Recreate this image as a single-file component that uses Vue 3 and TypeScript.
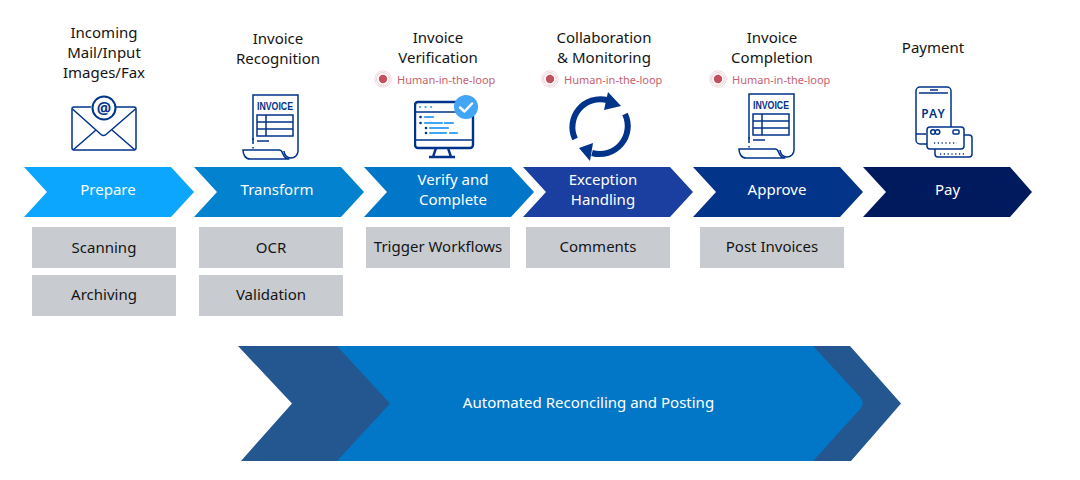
<template>
  <div class="page">
    <div class="flow">
      <div v-for="step in steps" :key="step.chevron" class="col" :style="{ width: step.colWidth + 'px' }">
        <div class="head">
          <div class="label" :style="{ width: step.labelWidth + 'px', paddingTop: step.labelTop + 'px' }">
            <div v-for="line in step.label" :key="line">{{ line }}</div>
          </div>
          <div v-if="step.hitl !== null" class="hitl" :style="{ marginLeft: step.hitl + 'px' }">
            <svg width="18" height="18" viewBox="0 0 18 18">
              <circle cx="9" cy="9" r="8.2" fill="none" stroke="#eab9c0" stroke-width="0.6" />
              <circle cx="9" cy="9" r="6.4" fill="none" stroke="#e3a3ad" stroke-width="0.6" />
              <circle cx="9" cy="9" r="4.2" fill="#c2505f" />
            </svg>
            <span>Human-in-the-loop</span>
          </div>
          <div class="icon" :style="{ marginLeft: step.iconLeft + 'px', marginBottom: step.iconBottom + 'px' }">
            <svg v-if="step.icon === 'mail'" width="66" height="58" viewBox="0 0 66 58" class="line">
              <path d="M20 12H3a2 2 0 0 0-2 2v39a2 2 0 0 0 2 2h60a2 2 0 0 0 2-2V14a2 2 0 0 0-2-2H45" />
              <path d="M1.500 14L30 39.500a4 4 0 0 0 5 0L64.500 14" />
              <path d="M2 55L25 35M64 55L41 35" />
              <circle cx="33" cy="13" r="11.500" stroke-width="2" fill="#fff" />
              <text x="33" y="18.500" class="at">@</text>
            </svg>
            <svg v-else-if="step.icon === 'invoice'" width="57" height="66" viewBox="0 0 57 66" class="line">
              <path d="M11 50V1H56V57a7 7 0 0 1-14 0" />
              <path d="M11 54.500V53M11 46V44" />
              <path d="M1 56H37c2 0 3 1 3.500 3 1 3 3 6 7 6H8C3 65 1 60 1 56Z" />
              <path d="M15 47H27" />
              <rect x="15" y="21" width="36" height="21" />
              <path d="M15 28H51M15 35H51M24 21V42" />
              <text transform="translate(33 15.500) scale(1 1.300)" class="inv">INVOICE</text>
            </svg>
            <svg v-else-if="step.icon === 'monitor'" width="66" height="65" viewBox="0 0 66 65">
              <g class="line thick">
                <path d="M45 7H4a3 3 0 0 0-3 3V50a3 3 0 0 0 3 3H56a3 3 0 0 0 3-3V21" />
                <path d="M1 17H45M1 45H59" stroke-width="1.600" />
                <path d="M22 53L19 62M34 53L37 62M15 62H41" />
              </g>
              <g class="dash">
                <path d="M6 12h.2M11.500 12h.2M17 12h.2" />
                <path d="M11 22h8M11 28h17M31 28h8M16 33h18M16 38h16M36 38h7" />
              </g>
              <circle cx="6.500" cy="22" r="1.300" fill="#00338a" />
              <circle cx="6.500" cy="28" r="1.300" fill="#00338a" />
              <circle cx="12" cy="33" r="1.300" fill="#00338a" />
              <circle cx="12" cy="38" r="1.300" fill="#00338a" />
              <circle cx="52" cy="12" r="12" fill="#42a5f5" />
              <path d="M46 12.500L50.500 16.500L58 8.500" fill="none" stroke="#fff" stroke-width="2.500" stroke-linecap="round" stroke-linejoin="round" />
            </svg>
            <svg v-else-if="step.icon === 'sync'" width="66" height="72" viewBox="0 0 66 72">
              <path d="M9 49A28 28 0 0 1 41 10M59 24A28 28 0 0 1 26 63" fill="none" stroke="#00338a" stroke-width="6" />
              <path d="M42 2L55 16L38 20ZM13 58L27 53L24 71Z" fill="#00338a" />
            </svg>
            <svg v-else width="60" height="73" viewBox="0 0 60 73" class="line">
              <path d="M13 58H6a4 4 0 0 1-4-4V5a4 4 0 0 1 4-4H33a4 4 0 0 1 4 4V41" />
              <path d="M5 7H34M16 4H24M2 48H12" />
              <text x="19.500" y="32" class="pay">PAY</text>
              <rect x="13" y="41" width="37" height="22" rx="3" />
              <path d="M50 49H55a3 3 0 0 1 3 3V68a3 3 0 0 1-3 3H24a3 3 0 0 1-3-3V63" />
              <circle cx="19" cy="46" r="2.300" />
              <circle cx="23.500" cy="46" r="2.300" />
              <rect x="39" y="44" width="6" height="4" rx="1" />
              <path d="M20 57H43M26 68H51" stroke-dasharray="1.200 2.600" />
            </svg>
          </div>
        </div>
        <div class="chevron" :style="{ background: step.color, paddingLeft: step.padLeft + 'px', paddingRight: step.padRight + 'px' }">
          <div v-for="line in step.chevronLines" :key="line">{{ line }}</div>
        </div>
        <div class="tasks" :style="{ marginLeft: step.taskLeft + 'px' }">
          <div v-for="task in step.tasks" :key="task" class="task">{{ task }}</div>
        </div>
      </div>
    </div>

    <div class="band">
      <div class="band-front">Automated Reconciling and Posting</div>
    </div>
  </div>
</template>

<script setup lang="ts">
interface Step {
  chevron: string;
  chevronLines: string[];
  color: string;
  colWidth: number;
  label: string[];
  labelWidth: number;
  labelTop: number;
  hitl: number | null;
  icon: 'mail' | 'invoice' | 'monitor' | 'sync' | 'pay';
  iconLeft: number;
  iconBottom: number;
  padLeft: number;
  padRight: number;
  taskLeft: number;
  tasks: string[];
}

const steps: Step[] = [
  {
    chevron: 'prepare', chevronLines: ['Prepare'], color: '#0ca6ff', colWidth: 170,
    label: ['Incoming', 'Mail/Input', 'Images/Fax'], labelWidth: 160, labelTop: 22, hitl: null,
    icon: 'mail', iconLeft: 47, iconBottom: 14, padLeft: 0, padRight: 2, taskLeft: 8,
    tasks: ['Scanning', 'Archiving'],
  },
  {
    chevron: 'transform', chevronLines: ['Transform'], color: '#0382cf', colWidth: 170,
    label: ['Invoice', 'Recognition'], labelWidth: 168, labelTop: 28, hitl: null,
    icon: 'invoice', iconLeft: 48, iconBottom: 7, padLeft: 0, padRight: 4, taskLeft: 5,
    tasks: ['OCR', 'Validation'],
  },
  {
    chevron: 'verify', chevronLines: ['Verify and', 'Complete'], color: '#0277ca', colWidth: 159,
    label: ['Invoice', 'Verification'], labelWidth: 148, labelTop: 27, hitl: 10,
    icon: 'monitor', iconLeft: 50, iconBottom: 7, padLeft: 8, padRight: 0, taskLeft: 2,
    tasks: ['Trigger Workflows'],
  },
  {
    chevron: 'exception', chevronLines: ['Exception', 'Handling'], color: '#1b3fa0', colWidth: 170,
    label: ['Collaboration', '& Monitoring'], labelWidth: 162, labelTop: 27, hitl: 18,
    icon: 'sync', iconLeft: 43, iconBottom: 5, padLeft: 0, padRight: 10, taskLeft: 3,
    tasks: ['Comments'],
  },
  {
    chevron: 'approve', chevronLines: ['Approve'], color: '#02358a', colWidth: 170,
    label: ['Invoice', 'Completion'], labelWidth: 158, labelTop: 27, hitl: 16,
    icon: 'invoice', iconLeft: 45, iconBottom: 8, padLeft: 0, padRight: 2, taskLeft: 7,
    tasks: ['Post Invoices'],
  },
  {
    chevron: 'pay', chevronLines: ['Pay'], color: '#001a5e', colWidth: 169,
    label: ['Payment'], labelWidth: 140, labelTop: 37, hitl: null,
    icon: 'pay', iconLeft: 51, iconBottom: 8, padLeft: 0, padRight: 0, taskLeft: 0,
    tasks: [],
  },
];
</script>

<style scoped>
.page {
  width: 1080px;
  height: 480px;
  overflow: hidden;
  font-family: "Noto Sans", "Liberation Sans", sans-serif;
  font-size: 15px;
  color: #141414;
}

.flow {
  display: flex;
  padding-left: 24px;
}

.col {
  flex: none;
  display: flex;
  flex-direction: column;
}

.head {
  height: 167px;
  display: flex;
  flex-direction: column;
}

.label {
  line-height: 20px;
  text-align: center;
}

.hitl {
  display: flex;
  align-items: center;
  gap: 5px;
  margin-top: 3px;
  height: 18px;
  font-size: 11px;
  color: #c8606f;
}

.icon {
  margin-top: auto;
  line-height: 0;
}

.line {
  fill: none;
  stroke: #00338a;
  stroke-width: 1.500;
}

.thick {
  stroke-width: 2.400;
}

.dash {
  fill: none;
  stroke: #42a5f5;
  stroke-width: 2.200;
  stroke-linecap: round;
}

svg text {
  fill: #00338a;
  stroke: none;
  font-weight: 700;
  text-anchor: middle;
}

.at {
  font-size: 16px;
}

.inv {
  font-family: "Liberation Sans", sans-serif;
  font-size: 8.800px;
}

.pay {
  font-size: 12px;
  font-weight: 600;
  letter-spacing: 1px;
}

.chevron {
  width: 170px;
  height: 50px;
  padding-bottom: 7px;
  box-sizing: border-box;
  flex: none;
  display: flex;
  flex-direction: column;
  align-items: center;
  justify-content: center;
  line-height: 20px;
  color: #fff;
  clip-path: polygon(0 0, 147px 0, 100% 50%, 147px 100%, 0 100%, 23px 50%);
}

.col:last-child .chevron {
  width: 169px;
}

.tasks {
  display: flex;
  flex-direction: column;
  gap: 7px;
  margin-top: 10px;
}

.task {
  width: 144px;
  height: 41px;
  padding-bottom: 4px;
  box-sizing: border-box;
  display: flex;
  align-items: center;
  justify-content: center;
  background: #c8ccd1;
}

.col:nth-child(-n+2) .task:first-child {
  padding-bottom: 1px;
}

.band {
  width: 663px;
  height: 115px;
  margin: 30px 0 0 238px;
  padding-left: 99px;
  box-sizing: border-box;
  background: #24578f;
  clip-path: polygon(0 0, 612px 0, 100% 50%, 613px 100%, 3px 100%, 54px 50%);
}

.band-front {
  width: 527px;
  height: 115px;
  padding: 0 24px 4px 0;
  box-sizing: border-box;
  display: flex;
  align-items: center;
  justify-content: center;
  color: #fff;
  background: #0277c8;
  clip-path: polygon(0 0, 476px 0, 524px 52px, 526px 57px, 524px 62px, 476px 100%, 0 100%, 53px 50%);
}
</style>

<style>
html, body {
  background: #fff;
}
</style>
